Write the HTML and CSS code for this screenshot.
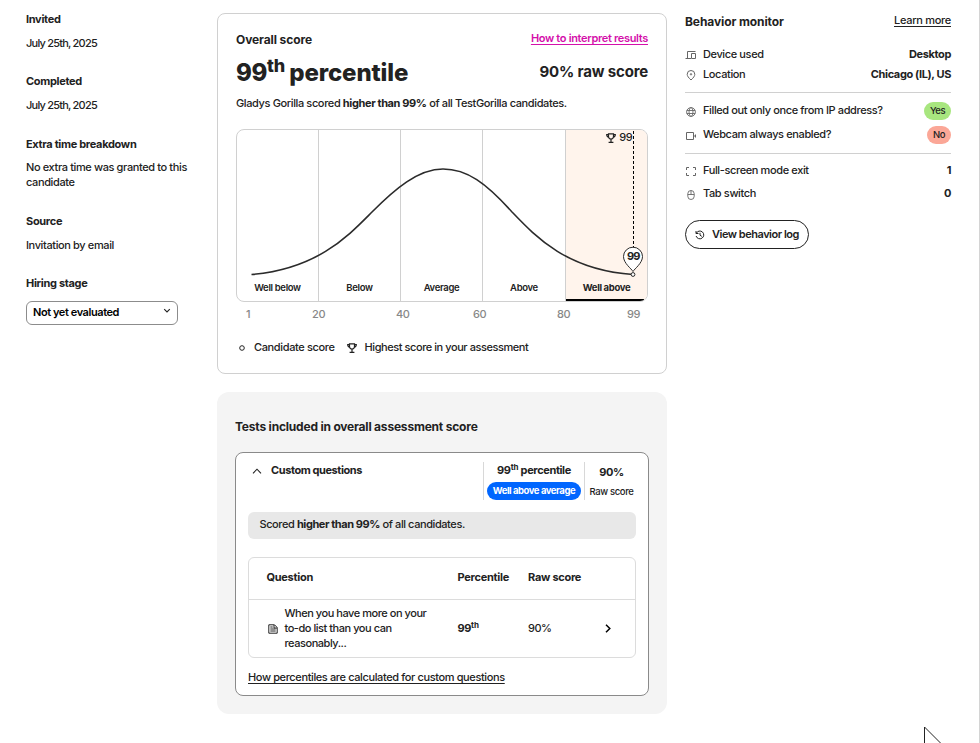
FILE: index.html
```html
<!DOCTYPE html>
<html lang="en">
<head>
    <meta charset="UTF-8">
    <title>Candidate results</title>
    <link rel="stylesheet" href="styles.css">
</head>
<body>
    <div class="page">
        <aside class="details">
            <div class="detail">
                <h3>Invited</h3>
                <p class="date">July 25th, 2025</p>
            </div>
            <div class="detail">
                <h3>Completed</h3>
                <p class="date">July 25th, 2025</p>
            </div>
            <div class="detail">
                <h3>Extra time breakdown</h3>
                <p class="extra">No extra time was granted to this candidate</p>
            </div>
            <div class="detail">
                <h3>Source</h3>
                <p>Invitation by email</p>
            </div>
            <div class="detail">
                <h3>Hiring stage</h3>
                <button class="stage-select">
                    Not yet evaluated
                    <svg width="8" height="6" viewBox="0 0 8 6"><path d="M1.2 1.2 4 4l2.8-2.8" fill="none" stroke="#222" stroke-width="1.1"/></svg>
                </button>
            </div>
        </aside>

        <main class="results">
            <section class="score-card">
                <div class="score-head">
                    <h2>Overall score</h2>
                    <a class="pink-link" href="#">How to interpret results</a>
                </div>
                <div class="score-main">
                    <div class="percentile"><span class="tight">99</span><sup>th</sup> percentile</div>
                    <div class="raw">90% raw score</div>
                </div>
                <p class="summary">Gladys Gorilla scored <b>higher than 99%</b> of all TestGorilla candidates.</p>

                <div class="chart">
                    <div class="band">Well below</div>
                    <div class="band">Below</div>
                    <div class="band">Average</div>
                    <div class="band">Above</div>
                    <div class="band active">Well above</div>
                    <svg class="curve" width="410" height="171" viewBox="0 0 410 171">
                        <path d="M14.500 144.5C81 139 112 105 135 82S181 39 206 39C230 39 249 53 275 82C299 107 330 140 396 144.5" fill="none" stroke="#2b2b2b" stroke-width="1.6"/>
                        <path d="M396.5 1v118" stroke="#000" stroke-dasharray="3 2"/>
                        <path d="M396 141.5c-1.6-2.8-9.5-8.3-9.5-15a9.5 9.3 0 0 1 19 0c0 6.7-7.9 12.2-9.5 15z" fill="#fff" stroke="#2b2b2b"/>
                        <circle cx="396" cy="144.5" r="1.9" fill="#fff" stroke="#2b2b2b"/>
                    </svg>
                    <span class="best">
                        <svg width="10" height="10" viewBox="0 0 10 10" fill="none" stroke="#222" stroke-width="1.2"><path d="M2.5.9h5v2.6a2.5 2.5 0 0 1-5 0zM2.5 1.5H.7c0 1.8.7 2.6 2.2 2.9M7.5 1.5h1.8c0 1.8-.7 2.6-2.2 2.9M5 6v3M2.6 9.3h4.800"/></svg>
                        99
                    </span>
                    <span class="pin-label">99</span>
                </div>
                <div class="axis">
                    <span>1</span><span>20</span><span>40</span><span>60</span><span>80</span><span>99</span>
                </div>
                <div class="legend">
                    <svg width="6" height="6" viewBox="0 0 6 6"><circle cx="3" cy="3" r="2.3" fill="none" stroke="#222"/></svg>
                    <span class="legend-candidate">Candidate score</span>
                    <svg width="10" height="10" viewBox="0 0 10 10" fill="none" stroke="#222" stroke-width="1.2"><path d="M2.5.9h5v2.6a2.5 2.5 0 0 1-5 0zM2.5 1.5H.7c0 1.8.7 2.6 2.2 2.9M7.5 1.5h1.8c0 1.8-.7 2.6-2.2 2.9M5 6v3M2.6 9.3h4.800"/></svg>
                    <span class="legend-highest">Highest score in your assessment</span>
                </div>
            </section>

            <section class="tests">
                <h2>Tests included in overall assessment score</h2>
                <div class="test">
                    <div class="test-head">
                        <svg class="chevron" width="10" height="6" viewBox="0 0 10 6"><path d="M1 5.3 5 1.2l4 4.1" fill="none" stroke="#222" stroke-width="1.1"/></svg>
                        <h3>Custom questions</h3>
                        <div class="stat stat-percentile">
                            <b>99<sup>th</sup> percentile</b>
                            <span class="badge">Well above average</span>
                        </div>
                        <div class="stat stat-raw">
                            <b>90%</b>
                            <span>Raw score</span>
                        </div>
                    </div>
                    <p class="note">Scored <b>higher than 99%</b> of all candidates.</p>
                    <div class="questions">
                        <div class="row row-head">
                            <span>Question</span>
                            <span>Percentile</span>
                            <span>Raw score</span>
                        </div>
                        <div class="row">
                            <div class="question">
                                <svg width="10" height="10" viewBox="0 0 10 10" fill="none" stroke="#222"><path d="M.8.8h5.700l2.700 2.700v5.700H.8z"/><path d="M2.300 3h2.400M2.300 5h5.400M2.300 7h5.400M6 1v3h3"/></svg>
                                <span>When you have more on your to-do list than you can reasonably...</span>
                            </div>
                            <b>99<sup>th</sup></b>
                            <span class="num">90%</span>
                            <svg width="6" height="9" viewBox="0 0 6 9"><path d="M1 .8 4.8 4.5 1 8.2" fill="none" stroke="#000" stroke-width="1.5"/></svg>
                        </div>
                    </div>
                    <a class="link" href="#">How percentiles are calculated for custom questions</a>
                </div>
            </section>
        </main>

        <aside class="monitor">
            <div class="monitor-head">
                <h2>Behavior monitor</h2>
                <a class="link" href="#">Learn more</a>
            </div>
            <div class="group group-device">
                <div class="item">
                    <svg width="12" height="12" viewBox="0 0 12 12" fill="none" stroke="#666"><path d="M10.5 2.5h-8v7M.5 9.5H6M6.5 4.5h4v5h-4z"/></svg>
                    <span>Device used</span>
                    <b>Desktop</b>
                </div>
                <div class="item">
                    <svg width="12" height="12" viewBox="0 0 12 12" fill="none" stroke="#666"><path d="M6 11C3.5 8.7 2.2 7 2.2 5.3a3.8 3.8 0 0 1 7.6 0C9.8 7 8.5 8.7 6 11z"/><circle cx="6" cy="5.3" r=".7"/></svg>
                    <span>Location</span>
                    <b>Chicago (IL), US</b>
                </div>
            </div>
            <div class="group group-checks">
                <div class="item">
                    <svg width="12" height="12" viewBox="0 0 12 12" fill="none" stroke="#666" stroke-width=".9"><circle cx="6" cy="6" r="4.4"/><ellipse cx="6" cy="6" rx="2" ry="4.4"/><path d="M1.8 4.5h8.4M1.8 7.5h8.4"/></svg>
                    <span>Filled out only once from IP address?</span>
                    <span class="pill yes">Yes</span>
                </div>
                <div class="item">
                    <svg width="12" height="12" viewBox="0 0 12 12" fill="none" stroke="#666"><path d="M1.5 2.5h7v7h-7z"/><path d="M9 6l2-2v4z" fill="#666" stroke="none"/></svg>
                    <span>Webcam always enabled?</span>
                    <span class="pill no">No</span>
                </div>
            </div>
            <div class="group group-counts">
                <div class="item">
                    <svg width="12" height="12" viewBox="0 0 12 12" fill="none" stroke="#666"><path d="M1.5 4V1.500H4M8 1.500h2.500V4M10.500 7v2.500H8M4 9.500H1.500V7"/></svg>
                    <span>Full-screen mode exit</span>
                    <b>1</b>
                </div>
                <div class="item">
                    <svg width="12" height="12" viewBox="0 0 12 12" fill="none" stroke="#666" stroke-width=".9"><rect x="2.800" y="1.500" width="6.400" height="9" rx="3.200"/><path d="M2.800 5.500h6.400M6 1.500v4"/></svg>
                    <span>Tab switch</span>
                    <b>0</b>
                </div>
            </div>
            <button class="log-btn">
                <svg width="10" height="10" viewBox="0 0 10 10" fill="none" stroke="#222"><path d="M1 1v2.500h2.500M1.300 3.300A3.900 3.900 0 1 1 1.100 6M5 2.800V5.200l1.800 1.200"/></svg>
                View behavior log
            </button>
        </aside>
    </div>

    <svg class="pointer" width="20" height="17" viewBox="0 0 20 17"><path d="M.5 18V1L18 18.500" fill="#fff" stroke="#222"/></svg>
</body>
</html>
```
FILE: styles.css
```css
* {
    box-sizing: border-box;
}

body {
    margin: 0;
    width: 980px;
    height: 743px;
    overflow: hidden;
    font-family: Inter, "Liberation Sans", sans-serif;
    font-size: 11px;
    font-weight: 500;
    line-height: 15px;
    letter-spacing: -0.38px;
    color: #222;
    background: #fff;
}

h2, h3, p {
    margin: 0;
}

h2 {
    font-size: 12px;
    font-weight: 700;
    letter-spacing: -0.1px;
}

h3 {
    font-size: 11px;
    font-weight: 700;
    letter-spacing: -0.32px;
}

b {
    font-weight: 700;
}

svg {
    display: block;
    flex-shrink: 0;
}

sup {
    line-height: 0;
}

button {
    font: inherit;
    letter-spacing: inherit;
    color: inherit;
    background: #fff;
    padding: 0;
}

.page {
    display: flex;
    height: 743px;
    border-right: 1px solid #d4d4d4;
}

/* left column */
.details {
    width: 217px;
    padding: 12px 20px 0 26px;
    display: flex;
    flex-direction: column;
    gap: 23.3px;
}

.detail p {
    margin-top: 9px;
}

.detail .extra {
    margin: 8px 0 1px;
}

.date {
    letter-spacing: -0.78px;
}

.stage-select {
    display: flex;
    justify-content: space-between;
    align-items: center;
    width: 152px;
    height: 24px;
    margin-top: 10px;
    padding: 0 6px 1px;
    border: 1px solid #8c8c8c;
    border-radius: 6px;
    font-weight: 600;
    letter-spacing: -0.42px;
    color: #000;
}

.stage-select svg {
    margin-bottom: 3px;
}

/* overall score */
.results {
    width: 450px;
    padding-top: 13px;
}

.score-card {
    height: 361px;
    padding: 17px 18px 0;
    border: 1px solid #d0d0d0;
    border-radius: 8px;
}

.score-head {
    display: flex;
    justify-content: space-between;
}

.score-head h2 {
    padding-top: 1px;
}

.pink-link {
    color: #d410aa;
    font-weight: 600;
    letter-spacing: -0.32px;
    text-underline-offset: 2px;
}

.score-main {
    display: flex;
    justify-content: space-between;
    align-items: center;
    height: 30px;
    margin-top: 10px;
}

.percentile {
    padding-top: 1px;
    font-size: 24px;
    font-weight: 800;
    line-height: 30px;
    letter-spacing: -0.13px;
    word-spacing: -1px;
}

.percentile .tight {
    letter-spacing: -0.4px;
}

.percentile sup {
    font-size: 18px;
    vertical-align: 9px;
}

.raw {
    padding-bottom: 2px;
    font-size: 15px;
    font-weight: 700;
    letter-spacing: -0.17px;
}

.summary {
    margin-top: 9px;
}

.chart {
    position: relative;
    display: grid;
    grid-template-columns: 82px 82px 82px 83px auto;
    height: 173px;
    margin-top: 18px;
    border: 1px solid #d0d0d0;
    border-radius: 8px;
}

.band {
    display: flex;
    align-items: flex-end;
    justify-content: center;
    padding-bottom: 6px;
    border-right: 1px solid #d0d0d0;
    font-size: 9.5px;
    font-weight: 600;
    letter-spacing: -0.33px;
}

.band.active {
    border-right: 0;
    border-radius: 0 7px 7px 0;
    background: linear-gradient(#000, #000) left bottom / 78px 2px no-repeat #fff4ec;
    font-weight: 700;
}

.curve {
    position: absolute;
    left: 0;
    top: 0;
}

.best {
    position: absolute;
    top: 0;
    right: 15px;
    display: flex;
    align-items: center;
    gap: 3px;
    letter-spacing: -0.6px;
}

.pin-label {
    position: absolute;
    top: 119px;
    left: 390px;
    font-weight: 700;
    letter-spacing: -0.9px;
}

.axis {
    display: grid;
    grid-template-columns: 66px 84px 77px 84px 70px auto;
    margin-top: 5px;
    padding-left: 10px;
    color: #888;
    letter-spacing: -0.4px;
}

.legend {
    display: flex;
    align-items: center;
    margin-top: 18px;
    padding-left: 3px;
}

.legend-candidate {
    margin: 0 12px 0 9px;
    letter-spacing: -0.36px;
}

.legend-highest {
    margin-left: 8px;
    letter-spacing: -0.44px;
}

/* included tests */
.tests {
    height: 322px;
    margin-top: 18px;
    padding: 27px 18px 0;
    border-radius: 12px;
    background: #f4f4f4;
}

.tests h2 {
    letter-spacing: -0.2px;
}

.test {
    height: 244px;
    margin-top: 18px;
    padding: 9px 12px 0;
    border: 1px solid #8a8a8a;
    border-radius: 8px;
    background: #fff;
}

.test-head {
    display: flex;
    height: 38px;
}

.test-head h3 {
    flex: 1;
    margin-left: 9px;
    padding-top: 1px;
    letter-spacing: -0.42px;
}

.chevron {
    margin: 6px 0 0 4px;
}

.stat {
    display: flex;
    flex-direction: column;
    align-items: center;
    border-left: 1px solid #d8d8d8;
    white-space: nowrap;
}

.stat-percentile {
    width: 101px;
    padding-top: 1px;
}

.stat-percentile sup,
.row sup {
    font-size: 8px;
    vertical-align: 4px;
    letter-spacing: -0.1px;
}

.badge {
    height: 18px;
    margin-top: 4px;
    padding: 0 6px;
    border-radius: 9px;
    background: #06f;
    color: #fff;
    font-size: 9.5px;
    font-weight: 700;
    line-height: 18px;
    letter-spacing: -0.45px;
}

.stat-raw {
    width: 52px;
    padding: 3px 0 0 2px;
    font-size: 9.5px;
    letter-spacing: -0.38px;
}

.stat-raw b {
    font-size: 11px;
    letter-spacing: -0.4px;
    margin-bottom: 4px;
}

.note {
    height: 27px;
    margin-top: 12px;
    padding: 5px 11.5px;
    border-radius: 6px;
    background: #e8e8e8;
    letter-spacing: -0.42px;
}

.questions {
    height: 101px;
    margin-top: 18px;
    border: 1px solid #dcdcdc;
    border-radius: 6px;
}

.row {
    display: grid;
    grid-template-columns: 191px 70.5px 77px auto;
    align-items: center;
    height: 57px;
    padding-left: 17.5px;
}

.row-head {
    height: 42px;
    border-bottom: 1px solid #dcdcdc;
    font-weight: 700;
    letter-spacing: -0.28px;
    padding-bottom: 2px;
}

.question {
    display: flex;
    align-items: center;
    gap: 7px;
    width: 164px;
    padding-left: 1px;
    letter-spacing: -0.46px;
}

.num {
    letter-spacing: -0.5px;
}

.link {
    color: inherit;
    text-underline-offset: 2px;
}

.test > .link {
    display: block;
    margin-top: 12px;
}

/* behavior monitor */
.monitor {
    width: 284px;
    padding: 13px 0 0 18px;
}

.monitor-head,
.group {
    width: 266px;
}

.monitor-head {
    display: flex;
    justify-content: space-between;
    height: 31px;
}

.monitor-head h2 {
    padding-top: 1px;
}

.monitor-head .link {
    letter-spacing: -0.29px;
}

.group + .group {
    border-top: 1px solid #d0d0d0;
}

.item {
    display: flex;
    align-items: center;
    gap: 6px;
    height: 20px;
}

.item svg {
    margin-top: 2px;
}

.item > :last-child {
    margin-left: auto;
}

.group-device {
    height: 48px;
}

.group-device + .group {
    height: 61px;
    padding-top: 6px;
}

.group-checks .item {
    height: 24px;
}

.group-checks .item > span:nth-child(2) {
    padding-bottom: 1px;
}

.group-counts {
    padding-top: 5px;
}

.group-counts .item {
    height: 23px;
}

.pill {
    height: 18px;
    padding: 0 6px;
    border-radius: 9px;
    font-size: 9.5px;
    line-height: 18px;
    letter-spacing: -0.5px;
}

.yes {
    background: #a8e67f;
}

.no {
    background: #fba797;
}

.log-btn {
    display: flex;
    align-items: center;
    gap: 7px;
    width: 124px;
    height: 29px;
    margin-top: 15px;
    padding-left: 9px;
    border: 1px solid #222;
    border-radius: 15px;
    font-weight: 600;
    letter-spacing: -0.48px;
}

/* mouse pointer over the page */
.pointer {
    position: absolute;
    left: 924px;
    top: 726px;
}
```
